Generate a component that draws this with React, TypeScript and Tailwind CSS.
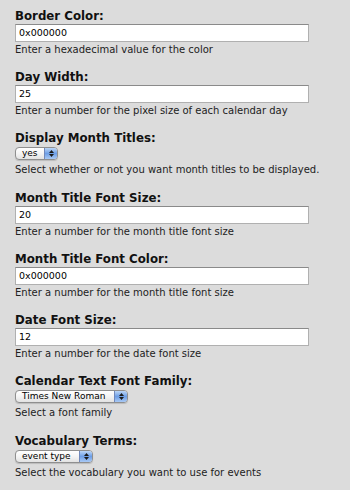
const font = { fontFamily: '"DejaVu Sans", Verdana, sans-serif' };

type Field =
  | { kind: "text"; label: string; value: string; help: string }
  | { kind: "select"; label: string; value: string; help: string; width: string };

const fields: Field[] = [
  { kind: "text", label: "Border Color:", value: "0x000000", help: "Enter a hexadecimal value for the color" },
  { kind: "text", label: "Day Width:", value: "25", help: "Enter a number for the pixel size of each calendar day" },
  { kind: "select", label: "Display Month Titles:", value: "yes", help: "Select whether or not you want month titles to be displayed.", width: "w-[43px]" },
  { kind: "text", label: "Month Title Font Size:", value: "20", help: "Enter a number for the month title font size" },
  { kind: "text", label: "Month Title Font Color:", value: "0x000000", help: "Enter a number for the month title font size" },
  { kind: "text", label: "Date Font Size:", value: "12", help: "Enter a number for the date font size" },
  { kind: "select", label: "Calendar Text Font Family:", value: "Times New Roman", help: "Select a font family", width: "w-[113px]" },
  { kind: "select", label: "Vocabulary Terms:", value: "event type", help: "Select the vocabulary you want to use for events", width: "w-[78px]" },
];

function PopupButton({ value, width }: { value: string; width: string }) {
  return (
    <div
      className={`${width} h-[13px] flex rounded-[4px] border border-[#8f8f8f] overflow-hidden bg-gradient-to-b from-white via-[#f4f4f4] to-[#e2e2e2] shadow-[0_1px_1px_rgba(0,0,0,0.15)]`}
    >
      <div className="flex-1 text-[9px] leading-[11px] text-black pl-[6px] whitespace-nowrap">{value}</div>
      <div className="w-[13px] border-l border-[#7088bb] bg-gradient-to-b from-[#bcd6f6] via-[#6d9ee6] to-[#a9c9f4] flex flex-col items-center justify-center gap-[1px]">
        <svg width="5" height="3" viewBox="0 0 5 3">
          <path d="M2.5 0 L5 3 L0 3 Z" fill="#1a1a1a" />
        </svg>
        <svg width="5" height="3" viewBox="0 0 5 3">
          <path d="M0 0 L5 0 L2.5 3 Z" fill="#1a1a1a" />
        </svg>
      </div>
    </div>
  );
}

export default function App() {
  return (
    <div className="w-[350px] h-[490px] bg-[#dcdcdc] pl-[15px] pt-[9px] overflow-hidden" style={font}>
      {fields.map((f) => (
        <div key={f.label} className={f.kind === "text" ? "mb-[14px]" : "mb-[15px]"}>
          <div className="text-[11.8px] leading-[14px] font-bold text-[#111]">{f.label}</div>
          {f.kind === "text" ? (
            <>
              <div className="mt-[1px] w-[294px] h-[18px] bg-white border border-[#b0b0b0] border-t-[#8a8a8a] text-[9.5px] leading-[16px] pl-[3px] text-black">
                {f.value}
              </div>
              <div className="mt-[2px] text-[10px] leading-[12px] text-[#222]">{f.help}</div>
            </>
          ) : (
            <>
              <div className="mt-[2px]">
                <PopupButton value={f.value} width={f.width} />
              </div>
              <div className="mt-[4px] text-[10px] leading-[12px] text-[#222]">{f.help}</div>
            </>
          )}
        </div>
      ))}
    </div>
  );
}
